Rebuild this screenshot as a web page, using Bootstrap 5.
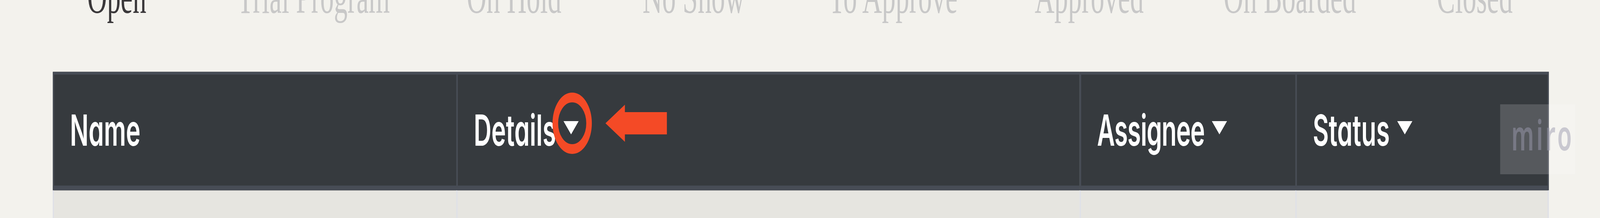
<!DOCTYPE html>
<html lang="en">
<head>
<meta charset="utf-8">
<title>Board</title>
<link href="https://cdn.jsdelivr.net/npm/bootstrap@5.3.0/dist/css/bootstrap.min.css" rel="stylesheet">
<style>
html, body { height: 558px; overflow: hidden; }
body { background: #f3f2ed; }
.sheet { --fit: .57175; position: relative; width: 7164px; height: 558px; overflow: hidden; transform-origin: 0 0; transform: scaleX(var(--fit)); }
.stage-tabs { margin-top: -69px; padding-left: 391px; font: 400 122px/1 "Liberation Serif", serif; color: #c8c8c8; white-space: nowrap; height: 253px; display: grid; grid-template-columns: 671px 1028px 787px 833px 923px 846px 955px auto; }
.stage-tabs a { color: inherit; text-decoration: none; }
.stage-tabs a.is-current { color: #3a383a; }
.board-wrap { margin-left: 237px; width: 6698px; }
.board-table { border-collapse: separate; border-spacing: 0; table-layout: fixed; width: 6698px; margin: 0; }
.board-table > :not(caption) > * > * { padding: 0; box-shadow: none; background: transparent; color: inherit; }
.board-table > thead > tr > th { background: #363a3e; color: #fff; height: 303px; padding-left: 71px; border-style: solid; border-color: #474c55; border-width: 7px 0 12px 7px; box-shadow: 0 -1px 0 #a5a6a5; font: 600 110px/1 Inter, sans-serif; font-feature-settings: "cv11"; vertical-align: middle; }
.board-table > thead > tr > th:first-child { border-left-width: 5px; box-shadow: 0 -1px 0 #a5a6a5, -1px 0 0 #a5a6a5; }
.board-table > thead > tr > th:last-child { border-right-width: 6px; }
.board-table > tbody > tr > td { background: #e6e5e0; height: 71px; border-style: solid; border-color: #a5a6a5 #dfe1e7 #dfe1e7; border-width: 1px 0 0 6px; }
.board-table > tbody > tr > td:first-child { border-left-width: 5px; box-shadow: -1px 0 0 #dfe1e7; }
.board-table > tbody > tr > td:last-child { border-right-width: 6px; }
.col-name { width: 1806px; }
.col-details { width: 2791px; }
.col-assignee { width: 966px; }
.col-status { width: 1135px; }
.head-inner { gap: 33px; }
.head-inner svg { width: 68px; height: 34px; flex: none; margin-bottom: 12px; }
.head-tight { letter-spacing: -1.7px; }
.notes { position: absolute; left: 0; top: 0; width: 7164px; height: 558px; pointer-events: none; }
.miro-mark { position: absolute; left: 6717px; top: 267px; width: 336px; height: 179px; background: rgba(255,255,255,.16); font: 600 106px/1 "Noto Sans", sans-serif; color: rgba(155,155,175,.49); padding: 24px 0 0 50px; letter-spacing: 10px; }
</style>
</head>
<body>
<div class="sheet" id="sheet">
<nav class="stage-tabs align-items-start">
  <a href="#" class="is-current">Open</a>
  <a href="#">Trial Program</a>
  <a href="#">On Hold</a>
  <a href="#">No Show</a>
  <a href="#">To Approve</a>
  <a href="#">Approved</a>
  <a href="#">On Boarded</a>
  <a href="#">Closed</a>
</nav>
<div class="board-wrap">
  <table class="table board-table">
    <colgroup>
      <col class="col-name"><col class="col-details"><col class="col-assignee"><col class="col-status">
    </colgroup>
    <thead>
      <tr>
        <th scope="col">Name</th>
        <th scope="col"><div class="d-flex align-items-center head-inner"><span>Details</span><svg viewBox="0 0 68 34"><polygon points="0,0 68,0 34,34" fill="#fff"/></svg></div></th>
        <th scope="col"><div class="d-flex align-items-center head-inner"><span class="head-tight">Assignee</span><svg viewBox="0 0 68 34"><polygon points="0,0 68,0 34,34" fill="#fff"/></svg></div></th>
        <th scope="col"><div class="d-flex align-items-center head-inner"><span>Status</span><svg viewBox="0 0 68 34"><polygon points="0,0 68,0 34,34" fill="#fff"/></svg></div></th>
      </tr>
    </thead>
    <tbody>
      <tr><td></td><td></td><td></td><td></td></tr>
    </tbody>
  </table>
</div>
<svg class="notes" viewBox="0 0 7164 558" aria-hidden="true">
  <ellipse cx="2562" cy="315.5" rx="75.5" ry="66" fill="none" stroke="#f44a26" stroke-width="25"/>
  <polygon points="2711,315.5 2798,268 2798,287 2986,287 2986,344 2798,344 2798,363" fill="#f44a26"/>
</svg>
<div class="miro-mark">miro</div>
</div>
<script src="https://cdn.jsdelivr.net/npm/bootstrap@5.3.0/dist/js/bootstrap.bundle.min.js"></script>
<script>
document.getElementById('sheet').style.setProperty('--fit', document.documentElement.clientWidth / 7164);
</script>
</body>
</html>
